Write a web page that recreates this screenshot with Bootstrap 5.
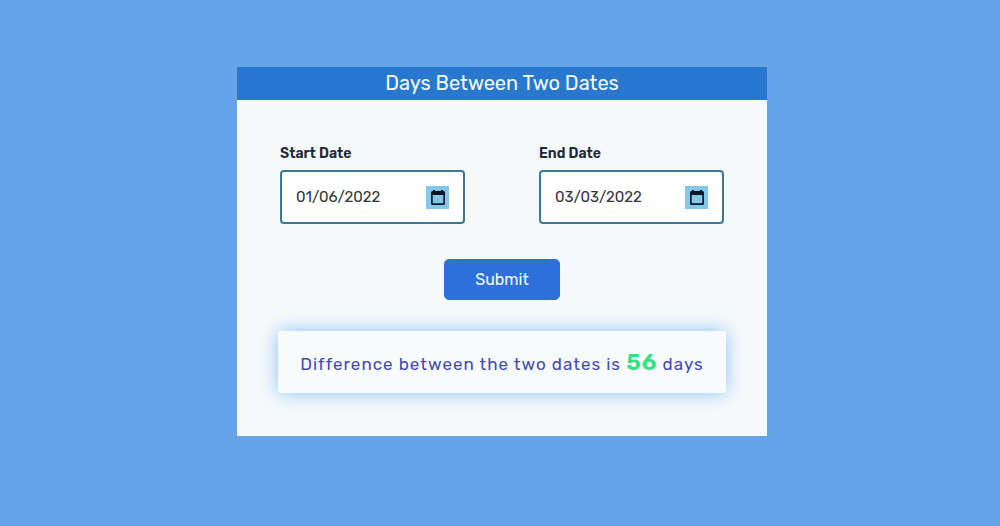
<!DOCTYPE html>
<html lang="en">
<head>
<meta charset="utf-8">
<meta name="viewport" content="width=device-width, initial-scale=1">
<title>Days Between Two Dates</title>
<link href="https://cdn.jsdelivr.net/npm/bootstrap@5.3.0/dist/css/bootstrap.min.css" rel="stylesheet">
<style>
  body { background: #65a4e8; font-family: Rubik, Roboto, sans-serif; }
  .page { padding: 67px 12px 24px 16px; }
  .calculator { max-width: 530px; background: #f5f9fa; }
  .calculator-title { background: #2778ce; color: #f4fbff; font-size: 20px; line-height: 33px; }
  .calculator-body { padding: 44px 43px 43px; }
  .date-field { width: 185px; }
  .date-field .form-label { color: #1e2838; font-size: 14px; line-height: 20px; font-weight: 600; margin-bottom: 6px; }
  .date-field .form-control { height: 54px; padding: 0 14px; border: 2px solid #3a7899; border-radius: 4px; background: #fff; color: #34343c; font-size: 15px; }
  .form-control::-webkit-calendar-picker-indicator {
    width: 17px; height: 17px; padding: 3px; opacity: 1; background-color: #83c8ea;
    background-image: url("data:image/svg+xml,%3Csvg xmlns='http://www.w3.org/2000/svg' viewBox='0 0 17 17'%3E%3Cpath fill='%23081828' fill-rule='evenodd' d='M4 1h2v1h6V1h2v1h.5Q16 2 16 3.500v11Q16 16 14.500 16h-11Q2 16 2 14.500v-11Q2 2 3.500 2H4zM3.700 6v8.300h10.600V6z'/%3E%3C/svg%3E");
    background-repeat: no-repeat; background-position: center; background-size: 17px 17px;
  }
  .submit-btn { --bs-btn-bg: #2d70d9; --bs-btn-border-color: #2d70d9; --bs-btn-color: #f1f9ff; width: 116px; height: 41px; padding: 0; border-radius: 5px; font-size: 16px; margin: 35px 0 31px; }
  .result { margin: 0 -2px; height: 62px; border-radius: 2px; background: #f7fbfc; color: #444ab2; font-size: 17px; letter-spacing: 1px; box-shadow: 0 0 18px #8cc2fa; }
  .result strong { color: #2fe483; font-size: 23px; font-weight: 600; }
</style>
</head>
<body>
<main class="page">
  <form class="calculator mx-auto">
    <h1 class="calculator-title fw-normal text-center mb-0">Days Between Two Dates</h1>
    <div class="calculator-body">
      <div class="d-flex flex-wrap justify-content-between gap-3">
        <div class="date-field">
          <label class="form-label d-block" for="start">Start Date</label>
          <input class="form-control" type="date" id="start" value="2022-01-06">
        </div>
        <div class="date-field">
          <label class="form-label d-block" for="end">End Date</label>
          <input class="form-control" type="date" id="end" value="2022-03-03">
        </div>
      </div>
      <div class="d-flex justify-content-center">
        <button class="btn btn-primary submit-btn" type="button">Submit</button>
      </div>
      <div class="result d-flex align-items-center justify-content-center">
        <output for="start end">Difference between the two dates is <strong>56</strong> days</output>
      </div>
    </div>
  </form>
</main>
<script src="https://cdn.jsdelivr.net/npm/bootstrap@5.3.0/dist/js/bootstrap.bundle.min.js"></script>
</body>
</html>
